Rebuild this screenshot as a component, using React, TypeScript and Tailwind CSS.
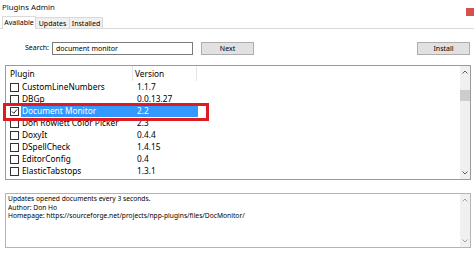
import React from 'react';

interface Plugin {
  name: string;
  version: string;
  checked?: boolean;
  selected?: boolean;
}

const PLUGINS: Plugin[] = [
  { name: 'CustomLineNumbers', version: '1.1.7' },
  { name: 'DBGp', version: '0.0.13.27' },
  { name: 'Document Monitor', version: '2.2', checked: true, selected: true },
  { name: 'Don Rowlett Color Picker', version: '2.3' },
  { name: 'DoxyIt', version: '0.4.4' },
  { name: 'DSpellCheck', version: '1.4.15' },
  { name: 'EditorConfig', version: '0.4' },
  { name: 'ElasticTabstops', version: '1.3.1' },
];

const FONT = { fontFamily: '"Segoe UI", "Noto Sans", "Open Sans", sans-serif' };

function Checkbox({ checked }: { checked?: boolean }) {
  return (
    <span className="w-[9px] h-[9px] border border-[#333] bg-white flex items-center justify-center shrink-0">
      {checked && (
        <svg width="7" height="7" viewBox="0 0 7 7" fill="none" stroke="#222" strokeWidth="1">
          <path d="M1 3.5 L2.8 5.3 L6 1.5" />
        </svg>
      )}
    </span>
  );
}

function ScrollBar() {
  return (
    <div className="w-[10px] bg-[#f0f0f0] flex flex-col items-center justify-between py-[4px] shrink-0">
      <svg width="6" height="4" viewBox="0 0 6 4" fill="none" stroke="#a0a0a0" strokeWidth="1">
        <path d="M0.5 3.5 L3 1 L5.5 3.5" />
      </svg>
      <svg width="6" height="4" viewBox="0 0 6 4" fill="none" stroke="#a0a0a0" strokeWidth="1">
        <path d="M0.5 0.5 L3 3 L5.5 0.5" />
      </svg>
    </div>
  );
}

export default function App() {
  return (
    <div className="w-[474px] h-[260px] bg-white overflow-hidden text-black flex flex-col" style={FONT}>
      {/* title bar */}
      <div className="h-[16px] flex justify-between items-start">
        <span className="text-[7.8px] leading-[15px] pl-[2px] text-[#111]">Plugins Admin</span>
        <span className="w-[8px] h-[8px] mt-[8px] bg-[#d65050]" />
      </div>

      {/* tabs */}
      <div className="h-[13px] flex items-end border-b border-[#d9d9d9] pl-[2px]">
        <div className="w-[34px] h-[13px] bg-white border border-b-0 border-[#d9d9d9] text-[7px] leading-[12px] text-center -mb-px pb-px">
          Available
        </div>
        <div className="w-[34px] h-[12px] bg-[#f0f0f0] border border-l-0 border-[#d9d9d9] text-[7px] leading-[11px] text-center -mb-px">
          Updates
        </div>
        <div className="w-[33px] h-[12px] bg-[#f0f0f0] border border-l-0 border-[#d9d9d9] text-[7px] leading-[11px] text-center -mb-px">
          Installed
        </div>
      </div>

      {/* search row */}
      <div className="mt-[13px] h-[13px] flex items-center text-[7px]">
        <span className="w-[51px] text-right pr-[2px]">Search:</span>
        <div className="w-[141px] h-[13px] border border-[#7a7a7a] px-[3px] leading-[11px] ml-[1px]">document monitor</div>
        <button className="ml-[8px] w-[53px] h-[13px] bg-[#e1e1e1] border border-[#adadad] leading-[11px]">Next</button>
        <div className="flex-1" />
        <button className="mr-[4px] w-[53px] h-[13px] bg-[#e1e1e1] border border-[#adadad] leading-[11px]">Install</button>
      </div>

      {/* plugin list */}
      <div className="mt-[10px] mx-[5px] mr-[3px] h-[115px] border border-[#9a9a9a] flex relative">
        <div className="flex-1 flex flex-col overflow-hidden text-[8.3px]">
          <div className="h-[15px] flex shrink-0">
            <div className="w-[127px] pl-[4px] leading-[15px] border-r border-[#e5e5e5]">Plugin</div>
            <div className="w-[64px] pl-[2px] leading-[15px] border-r border-[#e5e5e5]">Version</div>
          </div>
          {PLUGINS.map((p) => (
            <div key={p.name} className="h-[12px] flex items-center shrink-0">
              <div className="pl-[4px] pr-[2px] flex items-center">
                <Checkbox checked={p.checked} />
              </div>
              <div className={`w-[177px] h-[12px] flex items-center ${p.selected ? 'bg-[#3399ff] text-white' : ''}`}>
                <span className="w-[116px] pl-[1px] leading-[12px]">{p.name}</span>
                <span className="leading-[12px]">{p.version}</span>
              </div>
            </div>
          ))}
          {/* next row, only its checkbox edge shows */}
          <div className="h-[12px] flex items-start pt-[2px] shrink-0">
            <div className="pl-[4px] pr-[2px] flex">
              <Checkbox />
            </div>
          </div>
        </div>
        <div className="w-[10px] bg-[#f0f0f0] flex flex-col items-center justify-between py-[4px] shrink-0 relative">
          <svg width="6" height="4" viewBox="0 0 6 4" fill="none" stroke="#606060" strokeWidth="1">
            <path d="M0.5 3.5 L3 1 L5.5 3.5" />
          </svg>
          <svg width="6" height="4" viewBox="0 0 6 4" fill="none" stroke="#606060" strokeWidth="1">
            <path d="M0.5 0.5 L3 3 L5.5 0.5" />
          </svg>
          <div className="absolute left-0 top-[24px] w-[10px] h-[11px] bg-[#cdcdcd]" />
        </div>
        {/* highlight annotation */}
        <div className="absolute left-[-3px] top-[37px] w-[206px] h-[18px] border-[3px] border-[#e01a22] pointer-events-none" />
      </div>

      {/* description */}
      <div className="mt-[13px] mx-[5px] mr-[3px] h-[55px] border border-[#b4b4b4] flex">
        <div className="flex-1 pl-[2px] pt-[1px] text-[6.7px] leading-[8.5px]">
          <div>Updates opened documents every 3 seconds.</div>
          <div>Author: Don Ho</div>
          <div>Homepage: https://sourceforge.net/projects/npp-plugins/files/DocMonitor/</div>
        </div>
        <ScrollBar />
      </div>
    </div>
  );
}
